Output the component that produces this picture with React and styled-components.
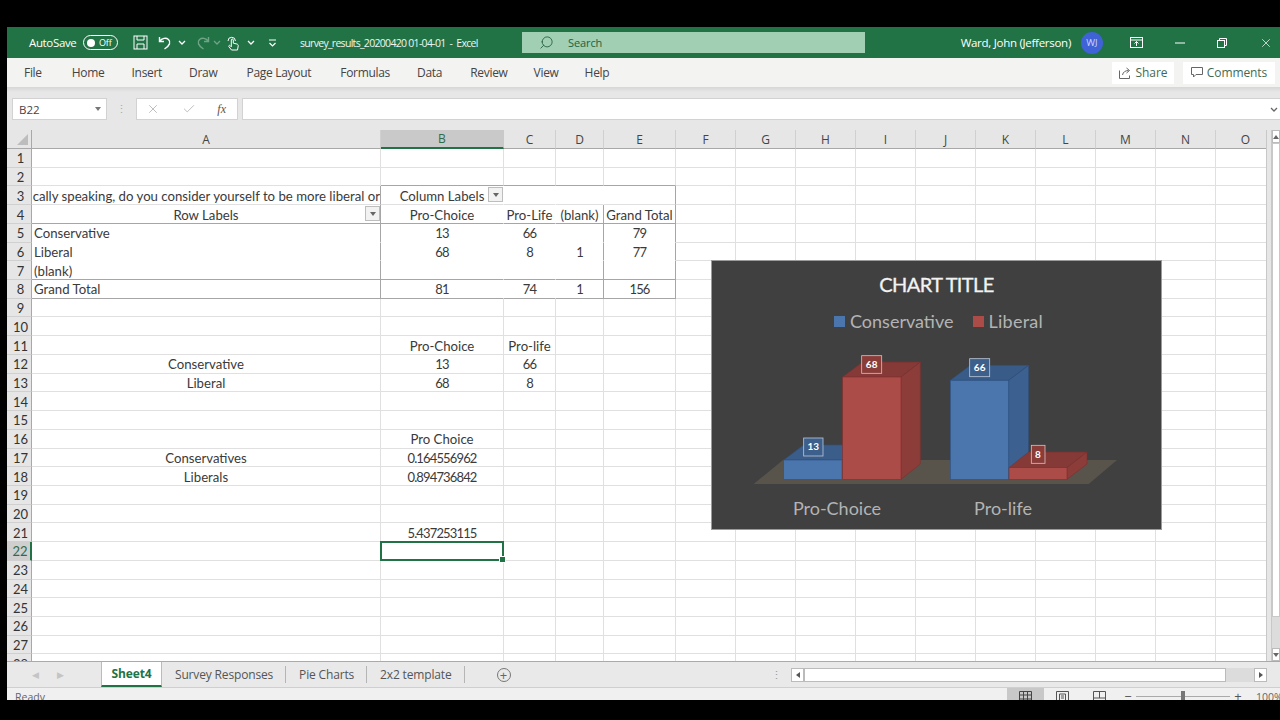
import React from 'react';
import styled, { createGlobalStyle } from 'styled-components';
import { Search as SearchIcon, X, Check } from 'lucide-react';

const Global = createGlobalStyle`
  html, body { margin: 0; padding: 0; background: #000; width: 1280px; height: 720px; overflow: hidden; }
  * { box-sizing: border-box; }
`;
const UI = `"Open Sans", "Noto Sans", sans-serif`;
const CALIBRI = `Lato, "Liberation Sans", sans-serif`;

const Frame = styled.div`
  margin: 27px 0 0 7px; width: 1273px; height: 673px; overflow: hidden;
  display: flex; flex-direction: column; background: #e6e6e6; font-family: ${UI};
`;
const TitleBar = styled.header`
  flex: 0 0 31px; display: flex; align-items: center; padding-left: 22px;
  background: #217346; color: #fff; font-size: 11.5px;
`;
const AutoSave = styled.span`width: 47px; white-space: nowrap; letter-spacing: -.35px;`;
const Toggle = styled.span`
  margin-left: 7px; width: 35px; height: 15px; border: 1px solid #fff; border-radius: 8px;
  display: flex; align-items: center; gap: 4px; padding-left: 3px; font-size: 9px; letter-spacing: -.2px;
  &::before { content: ''; width: 8px; height: 8px; border-radius: 50%; background: #fff; }
`;
const Slot = styled.span`
  flex: 0 0 ${p => p.$w}px; margin-left: ${p => p.$ml || 0}px; display: flex; align-items: center; justify-content: center;
  opacity: ${p => p.$dim ? .35 : 1};
`;
const DocTitle = styled.span`
  margin-left: 13px; width: 222px; flex: none; white-space: pre; font-size: 10.5px; letter-spacing: -.7px; color: #eef5f0;
`;
const SearchBox = styled.div`
  width: 343px; height: 21px; flex: none; background: #a0cfb3; color: #23603f; display: flex; align-items: center;
  padding-left: 17px; gap: 14px; font-size: 11px; letter-spacing: -.1px;
`;
const UserName = styled.span`margin-left: auto; white-space: nowrap; font-size: 11.5px; letter-spacing: -.28px;`;
const Avatar = styled.span`
  margin-left: 10px; width: 22px; height: 22px; border-radius: 50%; background: #3f62d6; color: #cfd8f8;
  flex: none; display: flex; align-items: center; justify-content: center; font-size: 9.5px;
`;
const RibbonTabs = styled.nav`
  flex: 0 0 29px; display: flex; align-items: center; padding-left: 17px; background: #f3f3f2;
  font-size: 12px; color: #444; letter-spacing: -.3px;
`;
const MenuItem = styled.span`margin-right: ${p => p.$gap || 27}px; white-space: nowrap;`;
const RibbonActions = styled.div`margin-left: auto; display: flex; gap: 9px; padding-right: 5px;`;
const RibbonButton = styled.span`
  height: 22px; width: ${p => p.$w}px; background: #fff; display: flex; align-items: center; justify-content: center;
  gap: 4px; color: #3f6b55; font-size: 12px; white-space: nowrap; letter-spacing: -.1px;
`;
const FormulaBar = styled.div`
  flex: 0 0 43px; display: flex; align-items: center; padding: 1px 0 0 5px;
  background: linear-gradient(#d6d6d6, #e7e7e7 5px);
`;
const NameBox = styled.div`
  width: 95px; height: 22px; background: #fff; border: 1px solid #d2d2d2; display: flex; align-items: center; justify-content: space-between;
  padding: 0 5px 0 6px; font-size: 11.5px; color: #444;
  &::after { content: ''; border: 3.5px solid transparent; border-top: 4px solid #777; border-bottom: 0; }
`;
const Dots = styled.span`width: 29px; text-align: center; color: #aaa; font-size: 11px; line-height: 8px; letter-spacing: 0;`;
const FxBox = styled.div`
  width: 102px; height: 22px; background: #fff; border: 1px solid #d2d2d2; display: flex; align-items: center; justify-content: space-between; padding: 0 11px 0 9px;
  color: #b5b5b5;
`;
const FxGlyph = styled.i`font-family: "Liberation Serif", serif; font-size: 12px; color: #555;`;
const FormulaInput = styled.div`
  flex: 1; margin-left: 4px; height: 22px; background: #fff; border: 1px solid #d2d2d2; border-right: 0; display: flex; align-items: center; justify-content: flex-end; padding-right: 2px;
`;
const SheetArea = styled.div`flex: 0 0 531px; display: flex; overflow: hidden; background: #e6e6e6;`;
const GridWrap = styled.div`position: relative; width: 1260px; height: 531px; overflow: hidden; flex: none; border-right: 1px solid #c8c8c8;`;
const Grid = styled.div`
  display: grid;
  grid-template-columns: 25px 349px 123px 52px 48px 72px repeat(10, 60px);
  grid-template-rows: 19px;
  grid-auto-rows: 18.72px; background: #fff; font-family: ${CALIBRI}; font-size: 13.2px; color: #3a3a3a;
  width: 1269px;
`;
const ColHead = styled.div`
  background: ${p => p.$sel ? '#c9c9c9' : '#e6e6e6'};
  border-right: 1px solid ${p => p.$sel ? '#c9c9c9' : '#d0d0d0'};
  border-bottom: ${p => p.$sel ? '2px solid #217346' : '1px solid #a8a8a8'};
  display: flex; align-items: center; justify-content: center; font-family: ${UI}; font-size: 12px;
  color: ${p => p.$sel ? '#2f6a49' : '#444'};
`;
const Corner = styled(ColHead)`
  border-right: 1px solid #a8a8a8; position: relative;
  &::after { content: ''; position: absolute; right: 3px; bottom: 3px; border-style: solid; border-width: 0 0 11px 11px; border-color: transparent transparent #bdbdbd transparent; }
`;
const RowHead = styled.div`
  background: ${p => p.$sel ? '#cfcfcf' : '#e6e6e6'};
  border-right: ${p => p.$sel ? '2px solid #217346' : '1px solid #a8a8a8'};
  border-bottom: 1px solid #d0d0d0; display: flex; align-items: center; justify-content: center;
  color: ${p => p.$sel ? '#2f6a49' : '#333'}; font-size: 13px; padding: 1px 0 0 3px;
`;
const Cell = styled.div`
  position: relative; display: flex; align-items: center; overflow: ${p => p.$clip ? 'hidden' : 'visible'}; white-space: nowrap;
  justify-content: ${p => p.$align === 'left' ? 'flex-start' : p.$align === 'right' ? 'flex-end' : 'center'};
  padding: 1px 0 0 ${p => p.$align === 'left' ? 2 : 0}px;
  font-size: ${p => p.$num ? '13px' : 'inherit'};
  letter-spacing: ${p => p.$num ? '-.85px' : 'normal'};
  border-right: 1px solid ${p => p.$r === 'strong' ? '#a6a6a6' : p.$r === 'none' ? '#fff' : '#e0e0e0'};
  border-bottom: 1px solid ${p => p.$b === 'strong' ? '#a6a6a6' : p.$b === 'none' ? '#fff' : '#e0e0e0'};
`;
const Selection = styled.span`
  position: absolute; inset: -1px -1px -1px -1px; border: 2px solid #217346; pointer-events: none; z-index: 2;
  &::after { content: ''; position: absolute; right: -3px; bottom: -3px; width: 5px; height: 5px; background: #217346; border: 1px solid #fff; box-sizing: content-box; margin: -1px; }
`;
const Filter = styled.span`
  position: absolute; top: 1px; right: 0; width: 15px; height: 15px; background: #f2f2f2; border: 1px solid #bdbdbd;
  display: flex; align-items: center; justify-content: center;
  &::after { content: ''; border: 3.5px solid transparent; border-top: 4px solid #666; border-bottom: 0; }
`;
const Chart = styled.section`
  position: absolute; left: 704px; top: 130px; width: 451px; height: 270px; background: #404040; border: 1px solid #9b9b9b; z-index: 3;
  display: flex; flex-direction: column; font-family: ${CALIBRI}; color: #b4b4b4;
`;
const ChartTitle = styled.h2`
  margin: 10px 0 0; height: 26px; line-height: 26px; text-align: center; color: #f2f2f2; font-size: 20px; font-weight: 400; letter-spacing: -.6px;
  -webkit-text-stroke: .3px #f2f2f2;
`;
const Legend = styled.div`margin-top: 12px; height: 24px; display: flex; align-items: center; padding-left: 122px; font-size: 18px;`;
const LegendText = styled.span`margin-right: ${p => p.$mr || 0}px; letter-spacing: ${p => p.$ls || 0}px;`;
const Swatch = styled.span`width: 11px; height: 11px; background: ${p => p.$c}; margin-right: 5px; flex: none;`;
const Plot = styled.svg`display: block; margin-top: 17px; flex: none;`;
const AxisRow = styled.div`margin-top: 6px; height: 24px; display: flex; padding-left: 42px; font-size: 18px;`;
const AxisLabel = styled.span`width: 166px; text-align: center; line-height: 24px;`;
const VScroll = styled.aside`flex: 1; margin-left: 4px; display: flex; flex-direction: column; background: #dcdcdc; border-left: 1px solid #c8c8c8;`;
const VBtn = styled.span`
  height: 13px; flex: none; background: #fff; border: 1px solid #bbb; display: flex; align-items: center; justify-content: center;
  &::after { content: ''; border: 3.5px solid transparent; ${p => p.$up ? 'border-bottom: 4px solid #666; border-top: 0;' : 'border-top: 4px solid #666; border-bottom: 0;'} }
`;
const VThumb = styled.span`height: 474px; flex: none; background: #fff; border: 1px solid #c8c8c8;`;
const VTrack = styled.span`flex: 1;`;
const TabBar = styled.div`
  flex: 0 0 27px; display: flex; align-items: stretch; background: #e9e9e9; border-top: 1px solid #aaa; border-bottom: 1px solid #cfcfcf;
  font-size: 12px; color: #555; letter-spacing: -.16px;
`;
const NavArrows = styled.div`width: 94px; display: flex; align-items: center; padding-left: 25px; gap: 18px; color: #c4c4c4; font-size: 9px;`;
const SheetTab = styled.span`
  display: flex; align-items: center; white-space: nowrap;
  ${p => p.$active ? `width: 61px; justify-content: center; background: #fff; color: #217346; font-weight: 700; border-bottom: 2px solid #217346; border-left: 1px solid #bbb; border-right: 1px solid #bbb;` : ''}
  ${p => !p.$active ? `position: relative; padding: 0 13px; &::after { content: ''; position: absolute; right: 0; top: 4px; bottom: 4px; width: 1px; background: #b5b5b5; }` : ''}
`;
const AddSheet = styled.span`
  margin: 6px 0 0 32px; width: 14px; height: 14px; border: 1px solid #777; border-radius: 50%; color: #666; display: flex; align-items: center; justify-content: center; font-size: 13px; line-height: 1; letter-spacing: 0;
`;
const HArea = styled.div`margin-left: auto; display: flex; align-items: center; padding-right: 13px;`;
const HDots = styled.span`color: #999; font-size: 11px; line-height: 5px; width: 15px; margin-right: 7px; text-align: center; letter-spacing: 0;`;
const HBtn = styled.span`
  width: 13px; height: 14px; background: #fff; border: 1px solid #bbb; display: flex; align-items: center; justify-content: center;
  &::after { content: ''; border: 3.5px solid transparent; ${p => p.$left ? 'border-right: 4px solid #555; border-left: 0;' : 'border-left: 4px solid #555; border-right: 0;'} }
`;
const HTrack = styled.span`width: 450px; height: 14px; background: #dcdcdc; display: flex;`;
const HThumb = styled.span`width: 422px; background: #fff; border: 1px solid #bbb;`;
const StatusBar = styled.footer`
  flex: 0 0 22px; display: flex; align-items: flex-start; background: #f0f0f0; padding-left: 8px; font-size: 10.5px; color: #666; line-height: 18px;
`;
const StatusRight = styled.div`margin-left: auto; display: flex; align-items: flex-start; height: 22px;`;
const ViewBtn = styled.span`width: 37px; height: 22px; padding-top: 3px; display: flex; justify-content: center; background: ${p => p.$on ? '#c8c8c8' : 'transparent'};`;
const ZoomSlider = styled.span`
  position: relative; width: 94px; height: 1px; background: #aaa; margin: 8px 3px 0 3px;
  &::after { content: ''; position: absolute; left: 45px; top: -5px; width: 4px; height: 11px; background: #777; }
`;
const ZoomSign = styled.span`width: 10px; margin-left: ${p => p.$ml || 0}px; text-align: center; font-size: 13px; color: #555; line-height: 16px;`;
const ZoomPct = styled.span`margin-left: 13px; width: 24px; white-space: nowrap; overflow: hidden; color: #666;`;

const Chev = ({ c = '#fff' }) => <svg width="8" height="5" viewBox="0 0 8 5" fill="none" stroke={c} strokeWidth="1.3"><path d="M1 1l3 3 3-3" /></svg>;
const Ic = ({ w = 15, h = 15, vb = '0 0 15 15', sw = 1, c = 'currentColor', children }) => (
  <svg width={w} height={h} viewBox={vb} fill="none" stroke={c} strokeWidth={sw}>{children}</svg>
);

const COLS = ['A', 'B', 'C', 'D', 'E', 'F', 'G', 'H', 'I', 'J', 'K', 'L', 'M', 'N', 'O'];
const cellText = {
  3: { B: 'Column Labels' },
  4: { A: 'Row Labels', B: 'Pro-Choice', C: 'Pro-Life', D: '(blank)', E: 'Grand Total' },
  5: { A: 'Conservative', B: '13', C: '66', E: '79' },
  6: { A: 'Liberal', B: '68', C: '8', D: '1', E: '77' },
  7: { A: '(blank)' },
  8: { A: 'Grand Total', B: '81', C: '74', D: '1', E: '156' },
  11: { B: 'Pro-Choice', C: 'Pro-life' },
  12: { A: 'Conservative', B: '13', C: '66' },
  13: { A: 'Liberal', B: '68', C: '8' },
  16: { B: 'Pro Choice' },
  17: { A: 'Conservatives', B: '0.164556962' },
  18: { A: 'Liberals', B: '0.894736842' },
  21: { B: '5.437253115' },
};
const borders = (r, c) => {
  const o = {};
  if (r === 2 && 'BCDE'.includes(c)) o.$b = 'strong';
  if (r >= 3 && r <= 8 && 'ABCDE'.includes(c)) {
    if (c === 'A') o.$r = 'strong';
    if (c === 'B' || c === 'C') o.$r = 'none';
    if (c === 'D') o.$r = r === 3 ? 'none' : 'strong';
    if (c === 'E') o.$r = 'strong';
    if (r === 4 || r === 7 || r === 8) o.$b = 'strong';
    if (r === 5 || r === 6) o.$b = 'none';
  }
  return o;
};

const ChartBars = () => (
  <Plot width="449" height="140" viewBox="35 300 1347 420" role="img">
    <polygon points="160,702 1165,702 1250,630 248,630" fill="#59544b" />
    <g strokeWidth="2">
      <polygon points="250,630 425,630 485,585 310,585" fill="#3a5d8a" stroke="#2f4e78" />
      <rect x="250" y="630" width="175" height="58" fill="#4a76ad" stroke="#2f5587" />
      <polygon points="427,381 602,381 660,336 487,336" fill="#863a37" stroke="#7a3230" />
      <polygon points="602,381 660,336 660,642 602,688" fill="#8c3d3a" stroke="#7a3230" />
      <rect x="427" y="381" width="175" height="307" fill="#ab4c48" stroke="#86302e" />
      <polygon points="750,391 925,391 985,346 810,346" fill="#385b88" stroke="#2f4e78" />
      <polygon points="925,391 985,346 985,642 925,688" fill="#3c6090" stroke="#2f4e78" />
      <rect x="750" y="391" width="175" height="297" fill="#4a76ad" stroke="#2f5587" />
      <polygon points="926,653 1100,653 1160,606 985,606" fill="#863a37" stroke="#7a3230" />
      <polygon points="1100,653 1160,606 1160,642 1100,688" fill="#8c3d3a" stroke="#7a3230" />
      <rect x="926" y="653" width="174" height="35" fill="#ab4c48" stroke="#86302e" />
    </g>
    <g fontFamily={CALIBRI} fontWeight="700" fontSize="30" fill="#fff" textAnchor="middle" strokeWidth="2.5">
      <rect x="310" y="564" width="58" height="54" fill="#3d5f8c" stroke="#b9c4d3" /><text x="339" y="601">13</text>
      <rect x="484" y="317" width="60" height="53" fill="#8a3c39" stroke="#d6bcbb" /><text x="514" y="354">68</text>
      <rect x="808" y="326" width="60" height="54" fill="#3d5f8c" stroke="#b9c4d3" /><text x="838" y="363">66</text>
      <rect x="993" y="586" width="41" height="54" fill="#8a3c39" stroke="#d6bcbb" /><text x="1013" y="623">8</text>
    </g>
  </Plot>
);

export default function App() {
  const rows = Array.from({ length: 28 }, (_, i) => i + 1);
  return (
    <>
      <Global />
      <Frame>
        <TitleBar>
          <AutoSave>AutoSave</AutoSave>
          <Toggle>Off</Toggle>
          <Slot $w={26} $ml={9}>
            <Ic><rect x="1" y="1" width="13" height="13" /><path d="M4 1v4h7V1M4 14V9h7v5" /></Ic>
          </Slot>
          <Slot $w={24}>
            <Ic w={14} vb="0 0 14 15" sw={1.4}><path d="M1.5 2v4.5H6M1.5 6.5C4 3 8 2.5 10.5 4.5c2.5 2.5 1.5 6-4 9.5" /></Ic>
          </Slot>
          <Slot $w={10}><Chev /></Slot>
          <Slot $w={20} $ml={6} $dim>
            <Ic w={14} vb="0 0 14 15" sw={1.4}><path d="M12.5 2v4.5H8M12.5 6.5C10 3 6 2.5 3.5 4.5c-2.5 2.5-1.5 6 4 9.5" /></Ic>
          </Slot>
          <Slot $w={8} $dim><Chev /></Slot>
          <Slot $w={24}>
            <Ic w={13} h={16} vb="0 0 13 16">
              <path d="M1 6a3.7 3.7 0 1 1 7.4 0" />
              <path d="M4.5 15l-2.6-3.4c-.6-1 .8-1.8 1.5-.8l.9 1V5c0-1.3 2-1.3 2 0v3.2l3.6.8c1 .3 1.5 1 1.3 2l-.7 4z" />
            </Ic>
          </Slot>
          <Slot $w={12}><Chev /></Slot>
          <Slot $w={30}>
            <svg width="9" height="8" viewBox="0 0 9 8" fill="none" stroke="#fff" strokeWidth="1.2"><path d="M1 1h7M1.5 4l3 3 3-3" /></svg>
          </Slot>
          <DocTitle>{'survey_results_20200420 01-04-01  -  Excel'}</DocTitle>
          <SearchBox><SearchIcon size={15} strokeWidth={1.4} style={{ transform: 'scaleX(-1)' }} />Search</SearchBox>
          <UserName>Ward, John (Jefferson)</UserName>
          <Avatar>WJ</Avatar>
          <Slot $w={44} $ml={11}>
            <Ic w={13} h={11} vb="0 0 13 11"><rect x=".5" y=".5" width="12" height="10" /><path d="M.5 3h12M6.5 9V4.5M4.5 6.5l2-2 2 2" /></Ic>
          </Slot>
          <Slot $w={44}><Ic w={10} h={2} vb="0 0 10 2"><path d="M0 1h10" /></Ic></Slot>
          <Slot $w={40}><Ic w={10} h={10} vb="0 0 10 10"><rect x=".5" y="2.5" width="7" height="7" /><path d="M2.5 2.5v-2h7v7h-2" /></Ic></Slot>
          <Slot $w={28} $ml={10}><X size={14} strokeWidth={1.2} /></Slot>
        </TitleBar>
        <RibbonTabs>
          <MenuItem $gap={30}>File</MenuItem>
          <MenuItem>Home</MenuItem>
          <MenuItem>Insert</MenuItem>
          <MenuItem $gap={29}>Draw</MenuItem>
          <MenuItem $gap={29}>Page Layout</MenuItem>
          <MenuItem>Formulas</MenuItem>
          <MenuItem $gap={28}>Data</MenuItem>
          <MenuItem $gap={26}>Review</MenuItem>
          <MenuItem $gap={26}>View</MenuItem>
          <MenuItem $gap={1}>Help</MenuItem>
          <RibbonActions>
            <RibbonButton $w={62}>
              <Ic w={13} h={12} vb="0 0 13 12" c="#666"><path d="M.5 3.5v8h10v-3M3.5 8c.5-3 3-4.5 6-4.5M7.5 1l3 2.5-3 2.5" /></Ic>Share
            </RibbonButton>
            <RibbonButton $w={92}>
              <Ic w={12} h={11} vb="0 0 12 11" c="#666"><path d="M.5.5h11v7H5L2.5 10V7.5h-2z" /></Ic>Comments
            </RibbonButton>
          </RibbonActions>
        </RibbonTabs>
        <FormulaBar>
          <NameBox>B22</NameBox>
          <Dots>⋮</Dots>
          <FxBox>
            <X size={14} strokeWidth={1.5} />
            <Check size={14} strokeWidth={1.5} />
            <FxGlyph>fx</FxGlyph>
          </FxBox>
          <FormulaInput><Chev c="#666" /></FormulaInput>
        </FormulaBar>
        <SheetArea>
          <GridWrap>
            <Grid>
              <Corner />
              {COLS.map(c => <ColHead key={c} $sel={c === 'B'}>{c}</ColHead>)}
              {rows.map(r => (
                <React.Fragment key={r}>
                  <RowHead $sel={r === 22}>{r}</RowHead>
                  {COLS.map(c => {
                    const text = cellText[r] && cellText[r][c];
                    const isLeft = r >= 5 && r <= 8 && c === 'A';
                    if (r === 3 && c === 'A') {
                      return <Cell key={c} $align="right" $clip {...borders(r, c)}>cally speaking, do you consider yourself to be more liberal or</Cell>;
                    }
                    return (
                      <Cell key={c} $align={isLeft ? 'left' : 'center'} $num={text && /^[\d.]+$/.test(text)} {...borders(r, c)}>
                        {text}
                        {((r === 4 && c === 'A') || (r === 3 && c === 'B')) && <Filter />}
                        {r === 22 && c === 'B' && <Selection />}
                      </Cell>
                    );
                  })}
                </React.Fragment>
              ))}
            </Grid>
            <Chart>
              <ChartTitle>CHART TITLE</ChartTitle>
              <Legend>
                <Swatch $c="#4a76ad" />
                <LegendText $mr={19}>Conservative</LegendText>
                <Swatch $c="#ab4c48" />
                <LegendText $ls={.25}>Liberal</LegendText>
              </Legend>
              <ChartBars />
              <AxisRow><AxisLabel>Pro-Choice</AxisLabel><AxisLabel>Pro-life</AxisLabel></AxisRow>
            </Chart>
          </GridWrap>
          <VScroll>
            <VBtn $up />
            <VThumb />
            <VTrack />
            <VBtn />
          </VScroll>
        </SheetArea>
        <TabBar>
          <NavArrows><span>◀</span><span>▶</span></NavArrows>
          <SheetTab $active>Sheet4</SheetTab>
          <SheetTab>Survey Responses</SheetTab>
          <SheetTab>Pie Charts</SheetTab>
          <SheetTab>2x2 template</SheetTab>
          <AddSheet>+</AddSheet>
          <HArea>
            <HDots>⋮</HDots>
            <HBtn $left />
            <HTrack><HThumb /></HTrack>
            <HBtn />
          </HArea>
        </TabBar>
        <StatusBar>
          Ready
          <StatusRight>
            <ViewBtn $on><Ic w={13} h={12} vb="0 0 13 12" c="#444"><path d="M.5.5h12v11H.5zM4.5.5v11M8.5.5v11M.5 4h12M.5 8h12" /></Ic></ViewBtn>
            <ViewBtn><Ic w={13} h={12} vb="0 0 13 12" c="#555"><path d="M.5.5h12v11H.5zM3.5 3h6v8h-6zM5 5h3M5 7h3" /></Ic></ViewBtn>
            <ViewBtn><Ic w={13} h={12} vb="0 0 13 12" c="#555"><path d="M.5.5h12v11H.5zM.5 7h12M6.5.5V7" /></Ic></ViewBtn>
            <ZoomSign $ml={5}>−</ZoomSign>
            <ZoomSlider />
            <ZoomSign>+</ZoomSign>
            <ZoomPct>100%</ZoomPct>
          </StatusRight>
        </StatusBar>
      </Frame>
    </>
  );
}
